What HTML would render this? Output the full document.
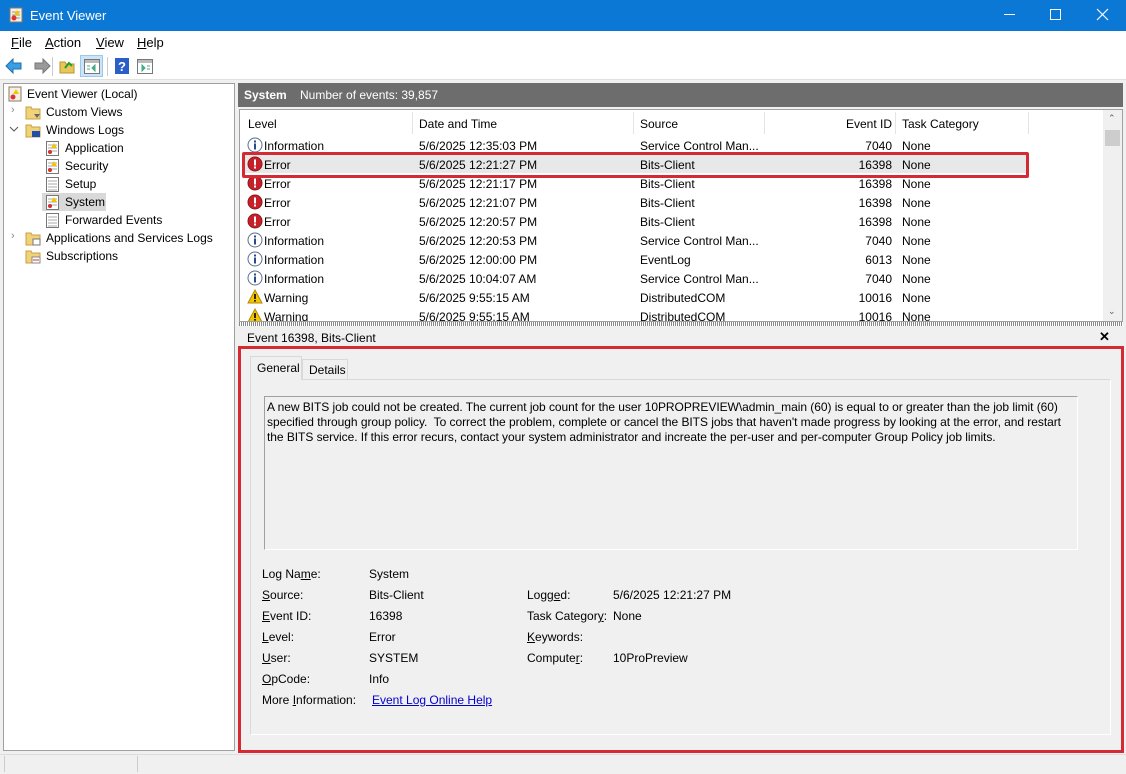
<!DOCTYPE html>
<html><head><meta charset="utf-8"><style>
*{margin:0;padding:0;box-sizing:border-box}
body{width:1126px;height:774px;overflow:hidden;background:#f0f0f0;font-family:"Liberation Sans",sans-serif;font-size:12px;color:#000;position:relative}
.a{position:absolute;white-space:nowrap}
u{text-decoration:underline}
.row{position:absolute;left:0;width:862px;height:19px}
.row span{position:absolute;top:3px}
</style></head><body>
<!-- title bar -->
<div class="a" style="left:0;top:0;width:1126px;height:31px;background:#0a78d4"></div>
<svg class="a" style="left:8px;top:7px" width="16" height="16"><rect x="2" y="1" width="12" height="14" fill="#f4f0e6" stroke="#8a7a60"/><path d="M4 5h8M4 8h8M4 11h8" stroke="#999"/><circle cx="6" cy="11" r="2.5" fill="#d33"/><path d="M9 3l3 5h-6z" fill="#f5c400"/></svg>
<div class="a" style="left:30px;top:8px;color:#fff;font-size:13px">Event Viewer</div>
<div class="a" style="left:1004px;top:14px;width:11px;height:1px;background:#fff"></div>
<div class="a" style="left:1050px;top:9px;width:11px;height:11px;border:1px solid #fff"></div>
<svg class="a" style="left:1096px;top:8px" width="13" height="13"><path d="M1 1L12 12M12 1L1 12" stroke="#fff" stroke-width="1.2"/></svg>
<!-- menu -->
<div class="a" style="left:0;top:31px;width:1126px;height:22px;background:#fff"></div>
<div class="a" style="left:11px;top:35px;font-size:13px"><u>F</u>ile</div>
<div class="a" style="left:45px;top:35px;font-size:13px"><u>A</u>ction</div>
<div class="a" style="left:96px;top:35px;font-size:13px"><u>V</u>iew</div>
<div class="a" style="left:137px;top:35px;font-size:13px"><u>H</u>elp</div>
<!-- toolbar -->
<div class="a" style="left:0;top:53px;width:1126px;height:27px;background:#fff;border-bottom:1px solid #e0e0e0"></div>
<svg class="a" style="left:5px;top:58px" width="46" height="16"><path d="M1 8l7-7v4h8v6H8v4z" fill="#3a9ee4" stroke="#1e6fb0"/><path d="M45 8l-7-7v4h-8v6h8v4z" fill="#9a9a9a" stroke="#777"/></svg>
<div class="a" style="left:52px;top:57px;width:1px;height:19px;background:#ccc"></div>
<svg class="a" style="left:59px;top:58px" width="16" height="16"><path d="M1 4h5l1 2h8v9H1z" fill="#e8c65a" stroke="#b8962e"/><path d="M6 10l4-5 3 3" stroke="#2a9a2a" stroke-width="2" fill="none"/></svg>
<div class="a" style="left:80px;top:55px;width:23px;height:22px;background:#cce4f7;border:1px solid #99c9ef"></div>
<svg class="a" style="left:84px;top:59px" width="16" height="15"><rect x="0.5" y="0.5" width="15" height="14" fill="#fff" stroke="#777"/><rect x="1" y="1" width="14" height="3" fill="#bbb"/><path d="M3 7h3M3 10h3M11 6l-3 3 3 3z" stroke="#4a8" fill="#4a8"/></svg>
<div class="a" style="left:107px;top:57px;width:1px;height:19px;background:#ccc"></div>
<svg class="a" style="left:115px;top:58px" width="14" height="16"><rect width="14" height="16" fill="#2b5fc8"/><text x="3" y="13" fill="#fff" font-size="13" font-weight="bold" font-family="Liberation Sans">?</text></svg>
<svg class="a" style="left:137px;top:59px" width="16" height="15"><rect x="0.5" y="0.5" width="15" height="14" fill="#fff" stroke="#777"/><rect x="1" y="1" width="14" height="3" fill="#bbb"/><path d="M10 7h3M10 10h3M5 6l3 3-3 3z" stroke="#4a8" fill="#4a8"/></svg>
<!-- left pane -->
<div class="a" style="left:3px;top:83px;width:232px;height:668px;background:#fff;border:1px solid #a0a0a0"></div>
<svg class="a" style="left:7px;top:86px" width="16" height="16"><rect x="2" y="1" width="12" height="14" fill="#f4f0e6" stroke="#8a7a60"/><circle cx="6" cy="11" r="2.5" fill="#d33"/><path d="M9 3l3 5h-6z" fill="#f5c400"/></svg>
<div class="a" style="left:27px;top:87px">Event Viewer (Local)</div>
<div class="a" style="left:11px;top:104px;color:#888;font-size:11px">›</div>
<svg class="a" style="left:25px;top:104px" width="16" height="16"><path d="M1 3h5l1 2h8v10H1z" fill="#f0d27a" stroke="#c8a040"/><path d="M9 10h6l-3 4z" fill="#666"/></svg>
<div class="a" style="left:46px;top:105px">Custom Views</div>
<svg class="a" style="left:9px;top:126px" width="10" height="8"><path d="M1 1l4 4 4-4" stroke="#555" fill="none"/></svg>
<svg class="a" style="left:25px;top:122px" width="16" height="16"><path d="M1 3h5l1 2h8v10H1z" fill="#f0d27a" stroke="#c8a040"/><rect x="7" y="9" width="8" height="6" fill="#1f4fa8"/></svg>
<div class="a" style="left:46px;top:123px">Windows Logs</div>
<div class="a" style="left:42px;top:193px;width:64px;height:18px;background:#d9d9d9"></div>
<svg class="a" style="left:45px;top:140px" width="16" height="90"><g fill="#fff" stroke="#777"><rect x="1.5" y="1.5" width="12" height="14"/><rect x="1.5" y="19.5" width="12" height="14"/><rect x="1.5" y="37.5" width="12" height="14"/><rect x="1.5" y="55.5" width="12" height="14"/><rect x="1.5" y="73.5" width="12" height="14"/></g><g stroke="#aaa"><path d="M3 5h9M3 8h9M3 11h9M3 23h9M3 26h9M3 29h9M3 41h9M3 44h9M3 47h9M3 50h9M3 59h9M3 62h9M3 65h9M3 77h9M3 80h9M3 83h9M3 86h9"/></g><g fill="#f5c400"><path d="M9 3l3 5h-6zM9 21l3 5h-6zM9 57l3 5h-6z"/></g><g fill="#c33"><circle cx="5" cy="12" r="2"/><circle cx="5" cy="30" r="2"/><circle cx="5" cy="66" r="2"/></g></svg>
<div class="a" style="left:65px;top:141px">Application</div>
<div class="a" style="left:65px;top:159px">Security</div>
<div class="a" style="left:65px;top:177px">Setup</div>
<div class="a" style="left:65px;top:195px">System</div>
<div class="a" style="left:65px;top:213px">Forwarded Events</div>
<div class="a" style="left:11px;top:230px;color:#888;font-size:11px">›</div>
<svg class="a" style="left:25px;top:230px" width="16" height="16"><path d="M1 3h5l1 2h8v10H1z" fill="#f0d27a" stroke="#c8a040"/><rect x="8" y="9" width="7" height="6" fill="#fff" stroke="#777"/></svg>
<div class="a" style="left:46px;top:231px">Applications and Services Logs</div>
<svg class="a" style="left:25px;top:248px" width="16" height="16"><path d="M1 3h5l1 2h8v10H1z" fill="#f0d27a" stroke="#c8a040"/><rect x="7" y="9" width="8" height="6" fill="#fff" stroke="#888"/><path d="M8 12h6" stroke="#c33"/></svg>
<div class="a" style="left:46px;top:249px">Subscriptions</div>
<!-- right header -->
<div class="a" style="left:238px;top:83px;width:885px;height:24px;background:#6d6d6d"></div>
<div class="a" style="left:244px;top:88px;color:#fff;font-weight:bold">System</div>
<div class="a" style="left:300px;top:88px;color:#fff">Number of events: 39,857</div>
<!-- list -->
<div class="a" style="left:239px;top:109px;width:884px;height:213px;background:#fff;border:1px solid #a0a0a0;overflow:hidden">
 <div class="a" style="left:0;top:0;width:862px;height:25px;background:#fff"></div>
 <div class="a" style="left:8px;top:7px">Level</div>
 <div class="a" style="left:179px;top:7px">Date and Time</div>
 <div class="a" style="left:400px;top:7px">Source</div>
 <div class="a" style="left:606px;top:7px">Event ID</div>
 <div class="a" style="left:662px;top:7px">Task Category</div>
 <div class="a" style="left:172px;top:2px;width:1px;height:22px;background:#e5e5e5"></div>
 <div class="a" style="left:393px;top:2px;width:1px;height:22px;background:#e5e5e5"></div>
 <div class="a" style="left:524px;top:2px;width:1px;height:22px;background:#e5e5e5"></div>
 <div class="a" style="left:655px;top:2px;width:1px;height:22px;background:#e5e5e5"></div>
 <div class="a" style="left:788px;top:2px;width:1px;height:22px;background:#e5e5e5"></div>
 <div class="a" style="left:2px;top:44px;width:786px;height:19px;background:#e8e8e8"></div>
 <div id="rows"></div>
 <!-- scrollbar -->
 <div class="a" style="left:863px;top:0;width:19px;height:211px;background:#f0f0f0"></div>
 <div class="a" style="left:865px;top:20px;width:15px;height:16px;background:#cdcdcd"></div>
 <div class="a" style="left:868px;top:3px;font-size:9px;color:#606060">&#8963;</div>
 <div class="a" style="left:868px;top:196px;font-size:9px;color:#606060">&#8964;</div>
</div>
<div class="a" style="left:242px;top:152px;width:787px;height:26px;border:3px solid #d42a34;border-radius:2px"></div>
<!-- splitter -->
<div class="a" style="left:239px;top:322px;width:884px;height:4px;background:repeating-linear-gradient(90deg,#888 0 1px,#fff 1px 2px)"></div>
<div class="a" style="left:247px;top:331px">Event 16398, Bits-Client</div>
<div class="a" style="left:1099px;top:329px;font-weight:bold;font-size:13px">✕</div>
<!-- red box -->
<div class="a" style="left:238px;top:346px;width:886px;height:407px;border:3px solid #d42a34"></div>
<!-- tabs -->
<div class="a" style="left:250px;top:379px;width:861px;height:356px;background:#f0f0f0;border:1px solid #d9d9d9;border-bottom-color:#fff;border-right-color:#fff"></div>
<div class="a" style="left:250px;top:356px;width:52px;height:24px;background:#f0f0f0;border:1px solid #d9d9d9;border-bottom:none"></div>
<div class="a" style="left:302px;top:359px;width:46px;height:20px;background:#f0f0f0;border:1px solid #d9d9d9;border-bottom:none"></div>
<div class="a" style="left:257px;top:361px">General</div>
<div class="a" style="left:309px;top:363px">Details</div>
<div class="a" style="left:264px;top:396px;width:814px;height:154px;border:1px solid #a0a0a0;border-right-color:#fff;border-bottom-color:#fff;background:#f0f0f0"></div>
<div class="a" style="left:267px;top:400px;line-height:15px;white-space:normal;width:808px;letter-spacing:-0.05px">A new BITS job could not be created. The current job count for the user 10PROPREVIEW\admin_main (60) is equal to or greater than the job limit (60) specified through group policy.&nbsp; To correct the problem, complete or cancel the BITS jobs that haven't made progress by looking at the error, and restart the BITS service. If this error recurs, contact your system administrator and increate the per-user and per-computer Group Policy job limits.</div>
<div class="a" style="left:262px;top:567px">Log Na<u>m</u>e:</div><div class="a" style="left:369px;top:567px">System</div>
<div class="a" style="left:262px;top:588px"><u>S</u>ource:</div><div class="a" style="left:369px;top:588px">Bits-Client</div>
<div class="a" style="left:262px;top:609px"><u>E</u>vent ID:</div><div class="a" style="left:369px;top:609px">16398</div>
<div class="a" style="left:262px;top:630px"><u>L</u>evel:</div><div class="a" style="left:369px;top:630px">Error</div>
<div class="a" style="left:262px;top:651px"><u>U</u>ser:</div><div class="a" style="left:369px;top:651px">SYSTEM</div>
<div class="a" style="left:262px;top:672px"><u>O</u>pCode:</div><div class="a" style="left:369px;top:672px">Info</div>
<div class="a" style="left:262px;top:693px">More <u>I</u>nformation:</div><div class="a" style="left:372px;top:693px;color:#0000d0;text-decoration:underline">Event Log Online Help</div>
<div class="a" style="left:527px;top:588px">Logg<u>e</u>d:</div><div class="a" style="left:613px;top:588px">5/6/2025 12:21:27 PM</div>
<div class="a" style="left:527px;top:609px">Task Categor<u>y</u>:</div><div class="a" style="left:613px;top:609px">None</div>
<div class="a" style="left:527px;top:630px"><u>K</u>eywords:</div>
<div class="a" style="left:527px;top:651px">Compute<u>r</u>:</div><div class="a" style="left:613px;top:651px">10ProPreview</div>
<!-- status bar -->
<div class="a" style="left:0;top:754px;width:1126px;height:20px;background:#f0f0f0;border-top:1px solid #ddd"></div>
<div class="a" style="left:4px;top:756px;width:1px;height:16px;background:#ccc"></div>
<div class="a" style="left:137px;top:756px;width:1px;height:16px;background:#ccc"></div>
<div class="a" style="left:1123px;top:0;width:3px;height:774px;background:#3a7ab8;opacity:.0"></div>
<script>
var d=[["i","Information","5/6/2025 12:35:03 PM","Service Control Man...","7040"],
["e","Error","5/6/2025 12:21:27 PM","Bits-Client","16398"],
["e","Error","5/6/2025 12:21:17 PM","Bits-Client","16398"],
["e","Error","5/6/2025 12:21:07 PM","Bits-Client","16398"],
["e","Error","5/6/2025 12:20:57 PM","Bits-Client","16398"],
["i","Information","5/6/2025 12:20:53 PM","Service Control Man...","7040"],
["i","Information","5/6/2025 12:00:00 PM","EventLog","6013"],
["i","Information","5/6/2025 10:04:07 AM","Service Control Man...","7040"],
["w","Warning","5/6/2025 9:55:15 AM","DistributedCOM","10016"],
["w","Warning","5/6/2025 9:55:15 AM","DistributedCOM","10016"]];
var h="";
var ic={i:'<circle cx="8" cy="8" r="7" fill="#fff" stroke="#5a6f8f"/><rect x="7" y="6.5" width="2" height="6" fill="#2a4a8a"/><rect x="7" y="3.5" width="2" height="2" fill="#2a4a8a"/>',
e:'<circle cx="8" cy="8" r="7" fill="#c8202a" stroke="#8a1a1a"/><rect x="7" y="3.5" width="2" height="6" fill="#fff"/><rect x="7" y="10.5" width="2" height="2" fill="#fff"/>',
w:'<path d="M8 1L15 14H1z" fill="#f5c400" stroke="#b08a00"/><rect x="7.2" y="5" width="1.6" height="5" fill="#000"/><rect x="7.2" y="11" width="1.6" height="1.6" fill="#000"/>'};
d.forEach(function(r,i){var t=26+i*19;
h+='<div class="row" style="top:'+t+'px"><svg style="position:absolute;left:7px;top:1px" width="16" height="16">'+ic[r[0]]+'</svg><span style="left:24px">'+r[1]+'</span><span style="left:179px">'+r[2]+'</span><span style="left:400px">'+r[3]+'</span><span style="right:210px">'+r[4]+'</span><span style="left:662px">None</span></div>';});
document.getElementById("rows").innerHTML=h;
</script>
</body></html>
